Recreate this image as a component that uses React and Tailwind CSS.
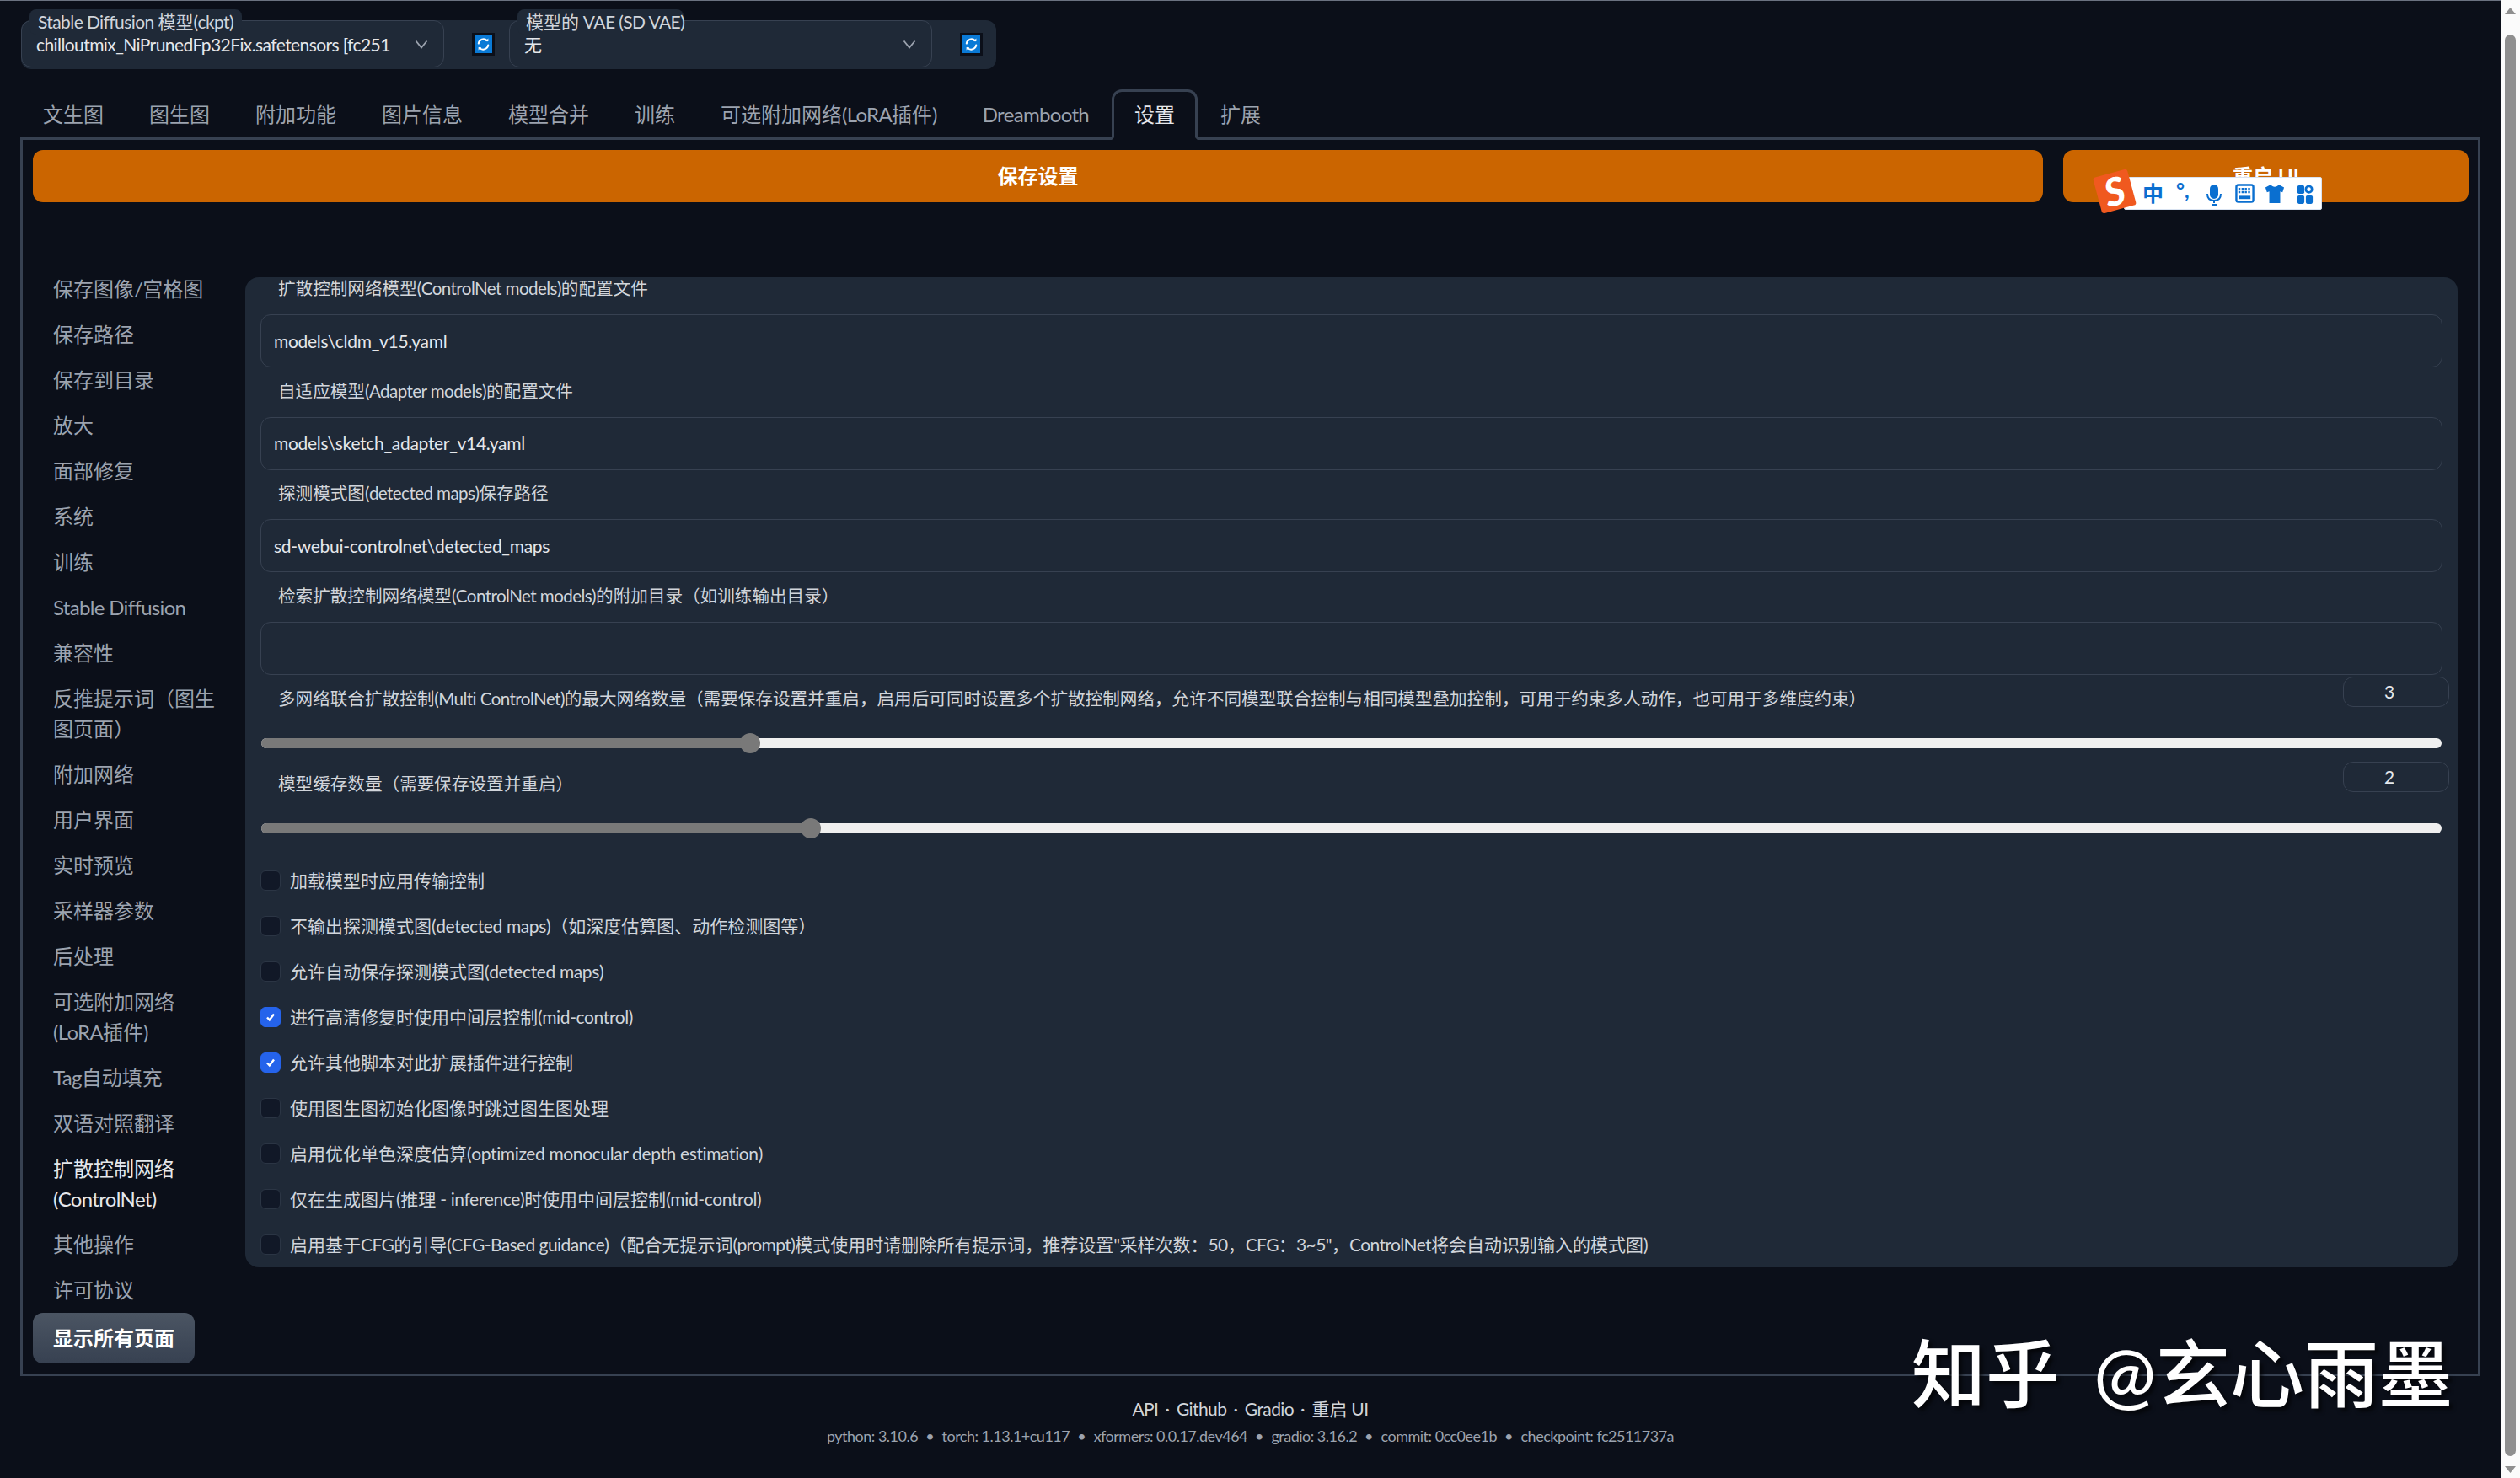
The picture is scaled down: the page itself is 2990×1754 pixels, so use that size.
import React from "react";

const sideItems = [
  "保存图像/宫格图", "保存路径", "保存到目录", "放大", "面部修复", "系统", "训练", "Stable Diffusion", "兼容性",
  "反推提示词（图生图页面）", "附加网络", "用户界面", "实时预览", "采样器参数", "后处理", "可选附加网络(LoRA插件)",
  "Tag自动填充", "双语对照翻译", "扩散控制网络(ControlNet)", "其他操作", "许可协议",
];
const tabs = ["文生图", "图生图", "附加功能", "图片信息", "模型合并", "训练", "可选附加网络(LoRA插件)", "Dreambooth", "设置", "扩展"];
const fields = [
  ["扩散控制网络模型(ControlNet models)的配置文件", "models\\cldm_v15.yaml"],
  ["自适应模型(Adapter models)的配置文件", "models\\sketch_adapter_v14.yaml"],
  ["探测模式图(detected maps)保存路径", "sd-webui-controlnet\\detected_maps"],
  ["检索扩散控制网络模型(ControlNet models)的附加目录（如训练输出目录）", ""],
];
const checks = [
  ["加载模型时应用传输控制", false],
  ["不输出探测模式图(detected maps)（如深度估算图、动作检测图等）", false],
  ["允许自动保存探测模式图(detected maps)", false],
  ["进行高清修复时使用中间层控制(mid-control)", true],
  ["允许其他脚本对此扩展插件进行控制", true],
  ["使用图生图初始化图像时跳过图生图处理", false],
  ["启用优化单色深度估算(optimized monocular depth estimation)", false],
  ["仅在生成图片(推理 - inference)时使用中间层控制(mid-control)", false],
  ["启用基于CFG的引导(CFG-Based guidance)（配合无提示词(prompt)模式使用时请删除所有提示词，推荐设置\"采样次数：50，CFG：3~5\"，ControlNet将会自动识别输入的模式图)", false, true],
];

// Latin runs of the reference are a little narrower than Lato
function T({ s, track = "tracking-[-0.028em]" }) {
  return s.split(/([\u0000-\u024F]+)/).map((part, i) =>
    /[\u0000-\u024F]/.test(part) ? (
      <span key={i} className={track}>{part}</span>
    ) : (
      part
    )
  );
}

function Refresh() {
  return (
    <div className="w-[27px] h-[27px] shrink-0 border-[3px] border-[#0b0f19] bg-[#0a7ad6] flex items-center justify-center">
      <svg width="19" height="19" viewBox="0 0 20 20" fill="none" stroke="#ffffff" strokeWidth="2.2" strokeLinecap="round">
        <path d="M4 9a6.2 6.2 0 0 1 10.6-3.6" />
        <path d="M16 11a6.2 6.2 0 0 1-10.6 3.6" />
        <path d="M16.2 2.6v3.8h-3.8" fill="#ffffff" stroke="none" />
        <path d="M3.8 17.4v-3.8h3.8" fill="#ffffff" stroke="none" />
      </svg>
    </div>
  );
}

function Dropdown({ label, value, pillWidth }) {
  return (
    <div className="relative w-[502px] h-[56px] shrink-0 border border-[#374151] rounded-[12px] bg-[#1f2937]">
      <div className={"absolute left-[9px] -top-[14px] h-[30px] px-[10px] flex items-center rounded-[8px] bg-[#1f2937] text-[21px] text-[#d1d5db] whitespace-nowrap " + pillWidth}>
        <span><T s={label} /></span>
      </div>
      <div className="absolute left-[17px] top-[13px] whitespace-nowrap text-[21px] leading-[30px] text-[#e5e7eb]"><T s={value} /></div>
      <svg className="absolute left-[466px] top-[22px]" width="16" height="11" viewBox="0 0 16 11" fill="none" stroke="#9ca3af" strokeWidth="1.8">
        <path d="M1.5 1.5L8 9.500l6.500-8" />
      </svg>
    </div>
  );
}

function Slider({ label, value, fill, pt, labelPt, mb }) {
  return (
    <div className={pt + " " + mb}>
      <div className="flex justify-between h-[45px]">
        <div className={"pl-[21px] text-[20.6px] leading-[30px] text-[#d1d5db] whitespace-nowrap " + labelPt}><T s={label} /></div>
        <div className="w-[126px] h-[36px] -mr-[8px] pr-[16px] rounded-[12px] border border-[#374151] flex items-center justify-center text-[21px] text-[#e5e7eb]">{value}</div>
      </div>
      <div className="mt-[28px] w-[2587px] ml-[1px] h-[12px] rounded-full bg-[#efefef] flex items-center">
        <div className="h-[12px] rounded-l-full bg-[#797979]" style={{ width: fill }} />
        <div className="w-[24px] h-[24px] -ml-[12px] rounded-full bg-[#797979] shrink-0" />
      </div>
    </div>
  );
}

function Check({ text, on, tight }) {
  return (
    <div className="h-[54px] flex items-center">
      <div className={"w-[24px] h-[24px] rounded-[6px] border flex items-center justify-center shrink-0 " + (on ? "bg-[#2563eb] border-[#2563eb]" : "bg-[#111827] border-[#2b3544]")}>
        {on && (
          <svg width="16" height="16" viewBox="0 0 16 16" fill="none" stroke="#ffffff" strokeWidth="2.4">
            <path d="M4 8.500l2.800 3L12 4.500" />
          </svg>
        )}
      </div>
      <div className="ml-[11px] text-[21px] leading-[30px] text-[#d1d5db] whitespace-nowrap">
        <T s={text} track={tight ? "tracking-[-0.028em]" : "tracking-[-0.018em]"} />
      </div>
    </div>
  );
}

function Sogou() {
  const c = "#0a6fd0";
  return (
    <div className="absolute left-[2487px] top-[203px] w-[268px] h-[47px]">
      <div className="absolute left-[33px] top-[7px] w-[235px] h-[39px] bg-white rounded-[2px] border border-[#d8e2f0] flex items-center">
        <span className="absolute left-[21px] top-[1px] text-[25px] leading-[34px] font-bold text-[#0a6fd0]">中</span>
        <span className="absolute left-[61px] top-[0px] text-[24px] leading-[30px] font-bold text-[#0a6fd0]">°,</span>
        <svg className="absolute left-[96px] top-[8px]" width="20" height="26" viewBox="0 0 20 26" fill="none" stroke={c} strokeWidth="2">
          <rect x="6" y="1" width="8" height="15" rx="4" fill={c} />
          <path d="M2 11c0 5 3 8 8 8s8-3 8-8M10 19v3M7 24h6" />
        </svg>
        <svg className="absolute left-[131px] top-[7px]" width="23" height="23" viewBox="0 0 24 24" fill="none" stroke={c}>
          <rect x="1.500" y="1.500" width="21" height="21" rx="2.500" strokeWidth="2.500" />
          <path d="M4 6.500h16M4 10.500h16" strokeWidth="2.500" strokeDasharray="2.500 1.500" />
          <path d="M5 17h14" strokeWidth="4" />
        </svg>
        <svg className="absolute left-[166px] top-[6px]" width="24" height="26" viewBox="0 0 26 26" fill={c}>
          <path d="M8 1c1 2 3 3 5 3s4-1 5-3l7 4-2 6-3-1v15H6V10l-3 1-2-6z" />
        </svg>
        <svg className="absolute left-[204px] top-[7px]" width="20" height="26" viewBox="0 0 22 26" fill={c}>
          <rect x="1" y="1" width="9" height="11" rx="2" />
          <circle cx="16" cy="6" r="4" fill="none" stroke={c} strokeWidth="3" />
          <rect x="1" y="14" width="9" height="11" rx="2" />
          <rect x="12" y="14" width="9" height="11" rx="2" />
        </svg>
      </div>
      <div className="absolute left-[1px] top-[2px] w-[42px] h-[44px] rounded-[3px] bg-[#f0591f] -rotate-[15deg] flex items-center justify-center text-[46px] leading-[44px] font-black italic text-white">S</div>
    </div>
  );
}

export default function App() {
  return (
    <div className="relative w-[2990px] h-[1754px] flex overflow-hidden bg-[#0b0f19] font-['Lato','Noto_Sans_CJK_SC',sans-serif]">
      <div className="w-[2967px] shrink-0 border-t border-[#6b7280]">
        {/* model selectors */}
        <div className="ml-[25px] mt-[23px] w-[1157px] h-[58px] rounded-[12px] bg-[#1f2937] flex items-start">
          <Dropdown label="Stable Diffusion 模型(ckpt)" value="chilloutmix_NiPrunedFp32Fix.safetensors [fc251" pillWidth="w-[252px]" />
          <div className="ml-[33px] mt-[15px] mr-[17px]"><Refresh /></div>
          <Dropdown label="模型的 VAE (SD VAE)" value="无" pillWidth="w-[197px]" />
          <div className="ml-[33px] mt-[15px]"><Refresh /></div>
        </div>

        {/* tabs */}
        <div className="mt-[24px] ml-[24px] flex relative z-10 -mb-[3px]">
          {tabs.map((t) => {
            const active = t === "设置";
            return (
              <div
                key={t}
                className={
                  "px-[24px] py-[9px] text-[24px] leading-[36px] whitespace-nowrap border-[3px] rounded-t-[12px] " +
                  (active
                    ? "border-[#374151] border-b-[#0b0f19] bg-[#0b0f19] text-[#e5e7eb]"
                    : "border-transparent text-[#9ca3af]")
                }
              >
                <T s={t} />
              </div>
            );
          })}
        </div>

        {/* tab content */}
        <div className="ml-[24px] w-[2919px] border-[3px] border-[#374151] p-[12px]">
          <div className="flex gap-[24px] -mr-[1px]">
            <div className="flex-1 h-[62px] rounded-[12px] bg-[#cb6500] flex items-center justify-center text-[24px] font-bold text-white">保存设置</div>
            <div className="w-[481px] h-[62px] rounded-[12px] bg-[#cb6500] flex items-center justify-center text-[24px] font-bold text-white">重启 UI</div>
          </div>

          <div className="flex items-start gap-[12px] mt-[76px]">
            <div className="w-[240px] shrink-0">
              {sideItems.map((s) => (
                <div key={s} className={"px-[24px] py-[9px] text-[24px] leading-[36px] " + (s.startsWith("扩散控制") ? "text-[#e5e7eb]" : "text-[#9ca3af]")}>
                  <T s={s} />
                </div>
              ))}
              <div className="w-[192px] h-[60px] rounded-[12px] bg-gradient-to-b from-[#4b5563] to-[#374151] flex items-center justify-center text-[24px] font-bold text-white whitespace-nowrap">显示所有页面</div>
            </div>

            <div className="w-[2625px] mt-[13px] px-[18px] rounded-[16px] bg-[#1f2937]">
              {fields.map(([label, value], i) => (
                <div key={label}>
                  <div className={"px-[21px] text-[20.6px] leading-[30px] text-[#d1d5db] whitespace-nowrap " + (i === 0 ? "-mt-[2px] pb-[16px]" : "pt-[12.67px] pb-[16px]")}><T s={label} /></div>
                  <div className="h-[63px] rounded-[12px] border border-[#374151] flex items-center px-[15px] text-[21px] text-[#e5e7eb]"><T s={value} track="tracking-[-0.014em]" /></div>
                </div>
              ))}
              <Slider
                label="多网络联合扩散控制(Multi ControlNet)的最大网络数量（需要保存设置并重启，启用后可同时设置多个扩散控制网络，允许不同模型联合控制与相同模型叠加控制，可用于约束多人动作，也可用于多维度约束）"
                value="3"
                fill="580px"
                pt="pt-[2px]"
                labelPt="pt-[11px]"
                mb="mb-[16px]"
              />
              <Slider label="模型缓存数量（需要保存设置并重启）" value="2" fill="652px" pt="" labelPt="pt-[11px]" mb="mb-[29px]" />
              {checks.map(([t, on, tight]) => (
                <Check key={t} text={t} on={on} tight={tight} />
              ))}
            </div>
          </div>
        </div>

        {/* footer */}
        <div className="mt-[24px] text-center text-[21px] leading-[30px] text-[#d1d5db]">
          <T s="API" /><span className="mx-[8px]">·</span><T s="Github" /><span className="mx-[8px]">·</span><T s="Gradio" /><span className="mx-[8px]">·</span><T s="重启 UI" />
        </div>
        <div className="mt-[5px] text-center text-[18px] leading-[24px] text-[#9ca3af]">
          <T s="python: 3.10.6" /><span className="mx-[9px]">•</span><T s="torch: 1.13.1+cu117" /><span className="mx-[9px]">•</span><T s="xformers: 0.0.17.dev464" /><span className="mx-[9px]">•</span><T s="gradio: 3.16.2" /><span className="mx-[9px]">•</span><T s="commit: 0cc0ee1b" /><span className="mx-[9px]">•</span><T s="checkpoint: fc2511737a" />
        </div>
      </div>

      {/* browser scrollbar */}
      <div className="w-[23px] shrink-0 bg-[#fbfbfb] flex flex-col items-center">
        <svg className="mt-[9px] shrink-0" width="13" height="8" viewBox="0 0 13 8" fill="#8f8f8f"><path d="M6.500 0L13 8H0z" /></svg>
        <div className="mt-[24px] w-[13px] h-[1687px] rounded-full bg-[#8f8f8f] shrink-0" />
        <svg className="mt-[12px] shrink-0" width="13" height="8" viewBox="0 0 13 8" fill="#8f8f8f"><path d="M0 0h13L6.500 8z" /></svg>
      </div>

      <Sogou />

      {/* watermark */}
      <div className="absolute left-[2268px] top-[1569px] text-[88px] leading-[120px] font-medium text-white whitespace-nowrap [word-spacing:18px] [text-shadow:4px_4px_4px_rgba(0,0,0,0.6)]">
        知乎 @玄心雨墨
      </div>
    </div>
  );
}
